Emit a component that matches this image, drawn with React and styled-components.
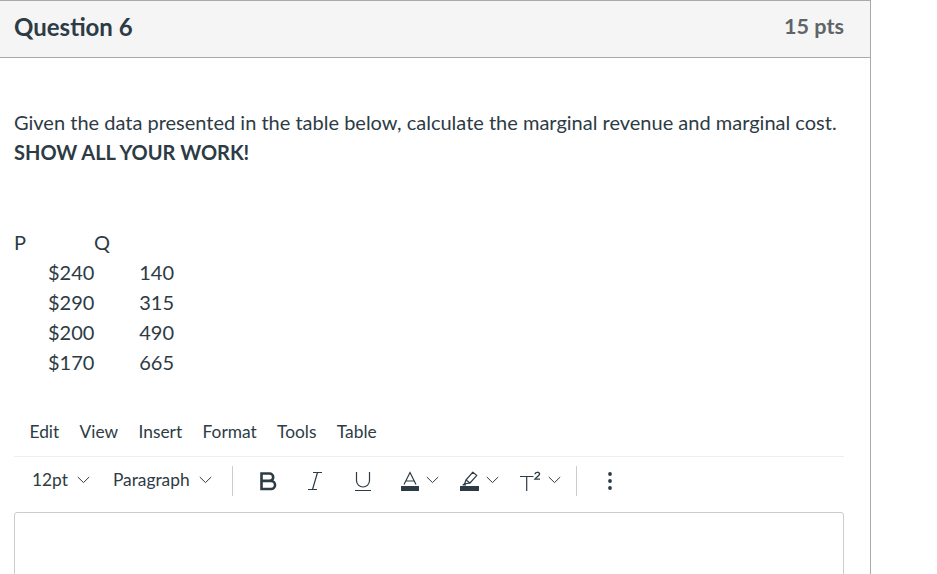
import React from "react";
import styled, { createGlobalStyle } from "styled-components";

const Global = createGlobalStyle`
  html, body { margin: 0; padding: 0; background: #fff; }
  body { font-family: Lato, "Open Sans", sans-serif; color: #2d3b45; width: 937px; height: 574px; overflow: hidden; }
`;
const Card = styled.div`
  width: 870px; height: 574px; box-sizing: content-box;
  border-top: 1px solid #aaa; border-right: 1px solid #aaa; overflow: hidden;
`;
const Header = styled.header`
  height: 56px; background: #f5f5f5; border-bottom: 1px solid #aaa;
  display: flex; align-items: center; justify-content: space-between;
  padding: 0 26px 0 14px;
`;
const Title = styled.h2`
  margin: 0 0 6px; font-size: 24px; font-weight: 700; color: #2d3b45;
`;
const Points = styled.div`
  margin-bottom: 7px; font-size: 21.6px; font-weight: 700; color: #5f6468;
`;
const Body = styled.main`
  padding: 49px 26px 0 14px; display: flex; flex-direction: column;
`;
const Para = styled.p`
  margin: 0; font-size: 20px; line-height: 30px;
`;
const Strong = styled.strong`
  font-weight: 700;
`;
const DataTable = styled.div`
  margin-top: 60px; display: grid;
  grid-template-columns: 34px 46px 80px 1fr;
  grid-auto-rows: 30px; font-size: 20px; line-height: 30px;
`;
const Cell = styled.div`
  grid-column: ${p => p.$col};
  text-align: ${p => p.$align || "left"};
`;
const MenuBar = styled.nav`
  margin-top: 39px; padding-left: 15.5px; display: flex; gap: 20.4px;
  height: 30px; align-items: center; font-size: 17.33px; color: #2d3b45;
`;
const Toolbar = styled.div`
  margin-top: 10px; height: 48px; border-top: 1px solid #eee;
  display: flex; align-items: center; padding-left: 18px; font-size: 17.33px;
`;
const Drop = styled.div`
  display: flex; align-items: center; gap: 9px; margin-bottom: 4px; margin-right: ${p => p.$mr || 0}px;
`;
const Sep = styled.div`
  width: 1px; height: 30px; background: #ccc; margin: 0 ${p => p.$r}px 0 ${p => p.$l}px;
`;
const Icon = styled.svg`
  display: block; flex: none; margin-right: ${p => p.$mr || 0}px; margin-top: ${p => p.$mt || 0}px; color: #2d3b45;
`;
const Editor = styled.div`
  margin-top: 7px; height: 80px; border: 1px solid #c7cdd1; border-radius: 3px;
`;

const Chev = ({ mr, mt }) => (
  <Icon $mr={mr} $mt={mt} width="13" height="8" viewBox="0 0 13 8" fill="none">
    <path d="M0.8 1 6.5 6.6 12.2 1" stroke="#2d3b45" strokeWidth="1" />
  </Icon>
);

const rows = [["$240", "140"], ["$290", "315"], ["$200", "490"], ["$170", "665"]];

export default function App() {
  return (
    <>
      <Global />
      <Card>
        <Header>
          <Title>Question 6</Title>
          <Points>15 pts</Points>
        </Header>
        <Body>
          <Para>Given the data presented in the table below, calculate the marginal revenue and marginal cost.</Para>
          <Para><Strong>SHOW ALL YOUR WORK!</Strong></Para>
          <DataTable>
            <Cell $col={1}>P</Cell>
            <Cell $col={3}>Q</Cell>
            {rows.map(([p, q]) => (
              <React.Fragment key={p}>
                <Cell $col={2} $align="right">{p}</Cell>
                <Cell $col={3} $align="right">{q}</Cell>
              </React.Fragment>
            ))}
          </DataTable>
          <MenuBar>
            <span>Edit</span><span>View</span><span>Insert</span><span>Format</span><span>Tools</span><span>Table</span>
          </MenuBar>
          <Toolbar>
            <Drop $mr={23}>12pt <Chev mt={2} /></Drop>
            <Drop>Paragraph <Chev mt={2} /></Drop>
            <Sep $l={20} $r={26} />
            <Icon $mr={31} width="18" height="20" viewBox="0 0 18 20" fill="none">
              <path d="M2.5 2.5h8a3.7 3.7 0 0 1 0 7.4h-8zM2.5 9.9h9.5a4 4 0 0 1 0 8.1H2.5z" stroke="#2d3b45" strokeWidth="2.6" />
            </Icon>
            <Icon $mr={32} width="14" height="20" viewBox="0 0 14 20" fill="none">
              <path d="M5 1.5h9M0 18.5h9M9.5 1.5 4.5 18.5" stroke="#2d3b45" strokeWidth="1.2" />
            </Icon>
            <Icon $mr={29} width="18" height="21" viewBox="0 0 18 21" fill="none">
              <path d="M2.5 1v8.5a6.5 6.5 0 0 0 13 0V1M1 19.5h16" stroke="#2d3b45" strokeWidth="1.2" />
            </Icon>
            <Icon $mr={7} width="18" height="20" viewBox="0 0 18 20" fill="none">
              <path d="M3 13.5 9 1.5l6 12M4.8 10h8.4" stroke="#2d3b45" strokeWidth="1.2" />
              <rect y="15" width="18" height="5" fill="#2d3b45" />
            </Icon>
            <Chev mr={21} mt={-2} />
            <Icon $mr={7} width="19" height="20" viewBox="0 0 19 20" fill="none">
              <path d="M12.8 1.2 16.8 4.4 10 12 6 9zM6 9 4.6 12.8 10 12M4.6 12.8 3 14h3" stroke="#2d3b45" strokeWidth="1.2" strokeLinejoin="round" />
              <rect y="15" width="19" height="5" fill="#2d3b45" />
            </Icon>
            <Chev mr={21} mt={-2} />
            <Icon $mr={7} width="21" height="20" viewBox="0 0 21 20" fill="none">
              <path d="M0 5.5h13.5M6.7 5.5V20" stroke="#2d3b45" strokeWidth="1.2" />
              <path d="M15 3.3c.2-2.6 4.6-2.6 4.6-.2 0 1.6-3 2.6-4.6 5h5" stroke="#2d3b45" strokeWidth="1.4" />
            </Icon>
            <Chev mt={-2} />
            <Sep $l={15} $r={31} />
            <Icon width="4" height="18" viewBox="0 0 4 18">
              <circle cx="2" cy="2" r="1.9" fill="#2d3b45" />
              <circle cx="2" cy="9" r="1.9" fill="#2d3b45" />
              <circle cx="2" cy="16" r="1.9" fill="#2d3b45" />
            </Icon>
          </Toolbar>
          <Editor />
        </Body>
      </Card>
    </>
  );
}
